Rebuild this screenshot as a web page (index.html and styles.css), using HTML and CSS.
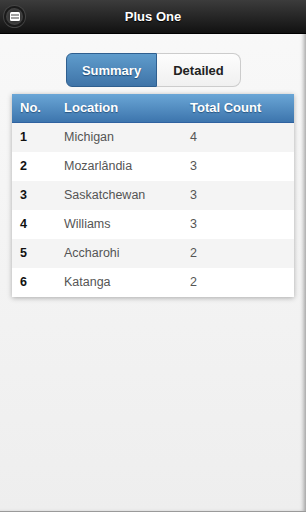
FILE: index.html
```html
<!DOCTYPE html>
<html lang="en">
<head>
  <meta charset="UTF-8">
  <title>Plus One</title>
  <link rel="stylesheet" href="styles.css">
</head>
<body>
  <div class="page">
    <div class="header">
      <button class="menu-button">
        <svg width="10" height="9" viewBox="0 0 10 9">
          <rect x="0" y="0" width="10" height="9" rx="1.5" fill="#fff"/>
          <rect x="1" y="2.5" width="8" height="1" fill="#444"/>
          <rect x="1" y="5.5" width="8" height="1" fill="#444"/>
        </svg>
      </button>
      <h1>Plus One</h1>
    </div>

    <div class="content">
      <div class="segmented">
        <button class="seg-button active">Summary</button>
        <button class="seg-button">Detailed</button>
      </div>

      <table class="summary-table">
        <thead>
          <tr>
            <th>No.</th>
            <th>Location</th>
            <th>Total Count</th>
          </tr>
        </thead>
        <tbody>
          <tr><td class="num">1</td><td>Michigan</td><td>4</td></tr>
          <tr><td class="num">2</td><td>Mozarlândia</td><td>3</td></tr>
          <tr><td class="num">3</td><td>Saskatchewan</td><td>3</td></tr>
          <tr><td class="num">4</td><td>Williams</td><td>3</td></tr>
          <tr><td class="num">5</td><td>Accharohi</td><td>2</td></tr>
          <tr><td class="num">6</td><td>Katanga</td><td>2</td></tr>
        </tbody>
      </table>
    </div>
  </div>
</body>
</html>
```

FILE: styles.css
```css
html, body {
  margin: 0;
  padding: 0;
}

body {
  font-family: 'Liberation Sans', Arial, sans-serif;
  background-color: #eee;
}

.page {
  height: 100vh;
  box-sizing: border-box;
  background: linear-gradient(#f9f9f9, #eeeeee);
  border-bottom: 1px solid #9a9a9a;
  box-shadow: inset -4px 0 4px -2px rgba(0,0,0,0.35);
  overflow: hidden;
}

.header {
  height: 34px;
  box-sizing: border-box;
  background: linear-gradient(#3c3c3c, #111);
  border-bottom: 1px solid #000;
  display: flex;
  align-items: center;
}

.header h1 {
  flex: 1;
  margin: 0;
  text-align: center;
  color: #fff;
  font-size: 13px;
  font-weight: bold;
  text-shadow: 0 1px 1px #000;
  padding-right: 25px;
}

.menu-button {
  width: 21px;
  height: 21px;
  margin-left: 4px;
  padding: 0;
  border-radius: 50%;
  border: 2px solid #1a1a1a;
  background: radial-gradient(circle, #333 40%, #555 100%);
  box-shadow: 0 0 0 1px #444;
  display: flex;
  align-items: center;
  justify-content: center;
}

.content {
  padding: 19px 12px 0 12px;
}

.segmented {
  display: flex;
  justify-content: center;
  margin-bottom: 7px;
}

.seg-button {
  font-family: 'Liberation Sans', Arial, sans-serif;
  font-size: 13px;
  font-weight: bold;
  height: 34px;
  padding: 0;
  cursor: pointer;
}

.seg-button.active {
  width: 91px;
  margin-left: 54px;
  color: #fff;
  text-shadow: 0 1px 1px #1f4a73;
  background: linear-gradient(#5f9ccc, #3f74a8);
  border: 1px solid #2f5f8f;
  border-radius: 6px 0 0 6px;
}

.seg-button:not(.active) {
  width: 84px;
  margin-right: 53px;
  color: #222;
  background: linear-gradient(#fdfdfd, #f0f0f0);
  border: 1px solid #ccc;
  border-left: none;
  border-radius: 0 8px 8px 0;
}

.summary-table {
  width: 100%;
  border-collapse: collapse;
  background-color: #fff;
  box-shadow: 0 1px 5px rgba(0,0,0,0.3);
}

.summary-table th {
  height: 27px;
  padding: 0 0 1px 8px;
  text-align: left;
  color: #fff;
  font-size: 13px;
  font-weight: bold;
  text-shadow: 0 1px 1px #2a5680;
  background: linear-gradient(#6aa6d6, #3d75ad);
  border-bottom: 1px solid #2f62a0;
}

.summary-table td {
  height: 27px;
  padding: 0 0 2px 8px;
  font-size: 12.5px;
  color: #555;
}

.summary-table th:nth-child(1),
.summary-table td:nth-child(1) {
  width: 36px;
}

.summary-table th:nth-child(2),
.summary-table td:nth-child(2) {
  width: 118px;
}

.summary-table tbody tr:nth-child(odd) {
  background-color: #f4f4f4;
}

.summary-table td.num {
  color: #111;
  font-weight: bold;
}
```
